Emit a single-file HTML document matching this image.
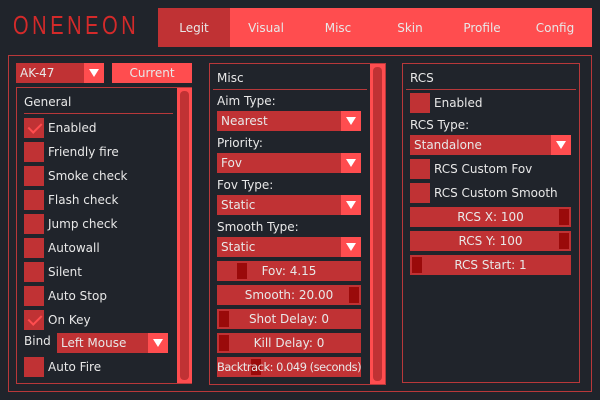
<!DOCTYPE html><html><head><style>
*{margin:0;padding:0;box-sizing:border-box}
body{width:600px;height:400px;background:#20242b;font-family:"DejaVu Sans","Liberation Sans",sans-serif;color:#e8e8e8;font-size:12px;position:relative;overflow:hidden}
.a{position:absolute;white-space:nowrap}
.logo{left:13px;top:12px;font-family:"Liberation Sans",sans-serif;font-size:20px;letter-spacing:3.6px;color:#d42a2a;transform:scale(1,1.3);transform-origin:0 0}
.tab{top:8px;height:39px;width:72px;background:#ff4d4f;line-height:40px;text-align:center;font-size:12px}
.fr{border:1px solid #b8383a}
.dd{height:20px;background:#c03234;line-height:21px;padding-left:4px;font-size:12px}
.dd i{position:absolute;right:0;top:0;width:20px;height:20px;background:#ff4d4f}
.dd i:after{content:"";position:absolute;left:5px;top:6px;border-left:5px solid transparent;border-right:5px solid transparent;border-top:8px solid #fff}
.cb{width:20px;height:20px;background:#c03234}
.lb{font-size:12px;line-height:21px}
.sl{height:20px;background:#c03234;text-align:center;line-height:21px;font-size:12px}
.sl b{position:absolute;top:2px;width:10px;height:16px;background:#9a0a0a}
.sb{background:#ff4d4f}
.sb:after{content:"";position:absolute;left:3px;right:3px;top:3px;bottom:3px;background:#c03234;border-radius:4px}
.hr{height:1px;background:#b8383a}
.ck:after{content:"";position:absolute;left:7px;top:2px;width:6px;height:11px;border-right:2px solid #ff4d4f;border-bottom:2px solid #ff4d4f;transform:rotate(45deg)}
</style></head><body>
<div class="a logo">ONENEON</div>
<div class="a tab" style="left:158px;background:#c03234">Legit</div>
<div class="a tab" style="left:230px">Visual</div>
<div class="a tab" style="left:302px">Misc</div>
<div class="a tab" style="left:374px">Skin</div>
<div class="a tab" style="left:446px">Profile</div>
<div class="a tab" style="left:518px;width:74px">Config</div>
<div class="a fr" style="left:8px;top:55px;width:584px;height:337px"></div>

<div class="a dd" style="left:16px;top:63px;width:88px">AK-47<i></i></div>
<div class="a" style="left:112px;top:63px;width:80px;height:20px;background:#ff4d4f;text-align:center;line-height:21px">Current</div>
<div class="a fr" style="left:16px;top:87px;width:176px;height:297px"></div>
<div class="a sb" style="left:177px;top:88px;width:15px;height:295px"></div>
<div class="a lb" style="left:24px;top:92px">General</div>
<div class="a hr" style="left:24px;top:113px;width:149px"></div>
<div class="a cb ck" style="left:24px;top:118px"></div><div class="a lb" style="left:48px;top:118px">Enabled</div>
<div class="a cb" style="left:24px;top:142px"></div><div class="a lb" style="left:48px;top:142px">Friendly fire</div>
<div class="a cb" style="left:24px;top:166px"></div><div class="a lb" style="left:48px;top:166px">Smoke check</div>
<div class="a cb" style="left:24px;top:190px"></div><div class="a lb" style="left:48px;top:190px">Flash check</div>
<div class="a cb" style="left:24px;top:214px"></div><div class="a lb" style="left:48px;top:214px">Jump check</div>
<div class="a cb" style="left:24px;top:238px"></div><div class="a lb" style="left:48px;top:238px">Autowall</div>
<div class="a cb" style="left:24px;top:262px"></div><div class="a lb" style="left:48px;top:262px">Silent</div>
<div class="a cb" style="left:24px;top:286px"></div><div class="a lb" style="left:48px;top:286px">Auto Stop</div>
<div class="a cb ck" style="left:24px;top:310px"></div><div class="a lb" style="left:48px;top:310px">On Key</div>
<div class="a lb" style="left:24px;top:331px">Bind</div>
<div class="a dd" style="left:57px;top:333px;width:111px">Left Mouse<i></i></div>
<div class="a cb" style="left:24px;top:357px"></div><div class="a lb" style="left:48px;top:357px">Auto Fire</div>

<div class="a fr" style="left:209px;top:63px;width:177px;height:322px"></div>
<div class="a sb" style="left:370px;top:64px;width:15px;height:320px"></div>
<div class="a lb" style="left:217px;top:68px">Misc</div>
<div class="a hr" style="left:213px;top:89px;width:154px"></div>
<div class="a lb" style="left:217px;top:91px">Aim Type:</div>
<div class="a dd" style="left:217px;top:111px;width:144px">Nearest<i></i></div>
<div class="a lb" style="left:217px;top:133px">Priority:</div>
<div class="a dd" style="left:217px;top:153px;width:144px">Fov<i></i></div>
<div class="a lb" style="left:217px;top:175px">Fov Type:</div>
<div class="a dd" style="left:217px;top:195px;width:144px">Static<i></i></div>
<div class="a lb" style="left:217px;top:217px">Smooth Type:</div>
<div class="a dd" style="left:217px;top:237px;width:144px">Static<i></i></div>
<div class="a sl" style="left:217px;top:261px;width:144px"><b style="left:20px"></b>Fov: 4.15</div>
<div class="a sl" style="left:217px;top:285px;width:144px"><b style="left:132px"></b>Smooth: 20.00</div>
<div class="a sl" style="left:217px;top:309px;width:144px"><b style="left:2px"></b>Shot Delay: 0</div>
<div class="a sl" style="left:217px;top:333px;width:144px"><b style="left:2px"></b>Kill Delay: 0</div>
<div class="a sl" style="left:217px;top:357px;width:144px;font-size:11.4px;letter-spacing:-0.45px;overflow:visible"><b style="left:34px"></b><span style="position:relative">Backtrack: 0.049 (seconds)</span></div>

<div class="a fr" style="left:402px;top:63px;width:178px;height:320px"></div>
<div class="a lb" style="left:410px;top:68px">RCS</div>
<div class="a hr" style="left:406px;top:89px;width:170px"></div>
<div class="a cb" style="left:410px;top:93px"></div><div class="a lb" style="left:434px;top:93px">Enabled</div>
<div class="a lb" style="left:410px;top:115px">RCS Type:</div>
<div class="a dd" style="left:410px;top:135px;width:161px">Standalone<i></i></div>
<div class="a cb" style="left:410px;top:159px"></div><div class="a lb" style="left:434px;top:159px">RCS Custom Fov</div>
<div class="a cb" style="left:410px;top:183px"></div><div class="a lb" style="left:434px;top:183px">RCS Custom Smooth</div>
<div class="a sl" style="left:410px;top:207px;width:161px"><b style="left:149px"></b>RCS X: 100</div>
<div class="a sl" style="left:410px;top:231px;width:161px"><b style="left:149px"></b>RCS Y: 100</div>
<div class="a sl" style="left:410px;top:255px;width:161px"><b style="left:2px"></b>RCS Start: 1</div>
</body></html>
